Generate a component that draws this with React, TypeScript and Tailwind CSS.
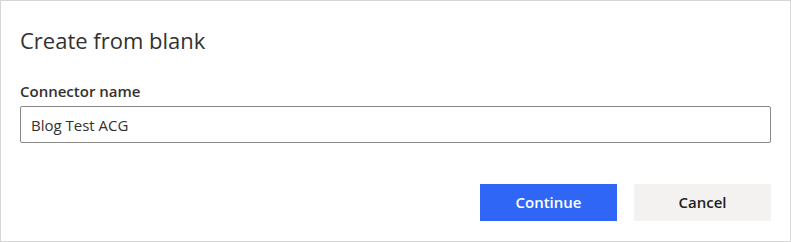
export default function App() {
  return (
    <div className="w-[791px] h-[242px] bg-white border border-[#d6d6d6] font-['Open_Sans',sans-serif] text-[#323130]">
      <div className="px-[19px] pt-[24px]">
        <h1 className="text-[22px] leading-[30px] font-normal">Create from blank</h1>

        <label className="block mt-[26px] text-[15px] leading-[20px] font-semibold">
          Connector name
        </label>
        <input
          className="mt-[5px] w-[751px] h-[37px] border border-[#8a8886] rounded-[2px] px-[10px] text-[15px] outline-none"
          defaultValue="Blog Test ACG"
        />

        <div className="flex justify-end gap-[17px] mt-[41px]">
          <button className="w-[137px] h-[37px] bg-[#2f66f6] text-white text-[15px] font-semibold">
            Continue
          </button>
          <button className="w-[137px] h-[37px] bg-[#f3f2f1] text-[#201f1e] text-[15px] font-semibold">
            Cancel
          </button>
        </div>
      </div>
    </div>
  );
}
